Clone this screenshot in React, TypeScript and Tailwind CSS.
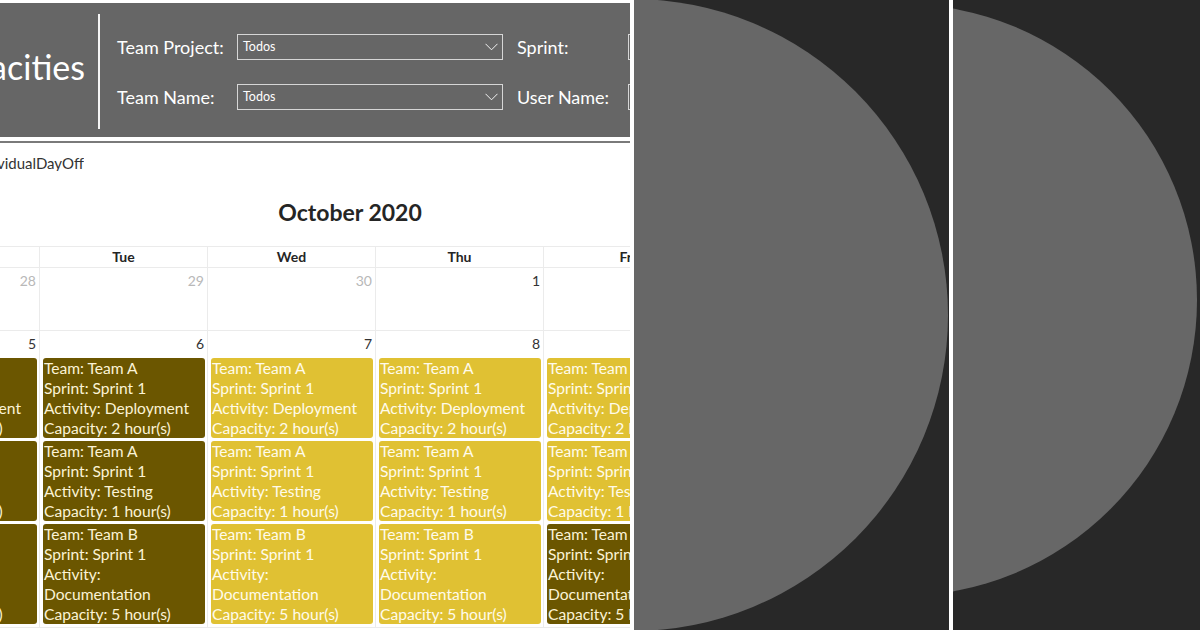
import React from 'react';

type Tone = 'dark' | 'light';

interface CalEvent {
  tone: Tone;
  lines: string[];
}

const deploy = ['Team: Team A', 'Sprint: Sprint 1', 'Activity: Deployment', 'Capacity: 2 hour(s)'];
const testing = ['Team: Team A', 'Sprint: Sprint 1', 'Activity: Testing', 'Capacity: 1 hour(s)'];
const docs = ['Team: Team B', 'Sprint: Sprint 1', 'Activity:', 'Documentation', 'Capacity: 5 hour(s)'];

const days = ['Mon', 'Tue', 'Wed', 'Thu', 'Fri', 'Sat', 'Sun'];

const firstWeek = [
  { n: 28, muted: true },
  { n: 29, muted: true },
  { n: 30, muted: true },
  { n: 1, muted: false },
  { n: 2, muted: false },
  { n: 3, muted: false },
  { n: 4, muted: false },
];

const secondWeek: { n: number; events: CalEvent[] }[] = [
  { n: 5, events: [{ tone: 'dark', lines: deploy }, { tone: 'dark', lines: testing }, { tone: 'dark', lines: docs }] },
  { n: 6, events: [{ tone: 'dark', lines: deploy }, { tone: 'dark', lines: testing }, { tone: 'dark', lines: docs }] },
  { n: 7, events: [{ tone: 'light', lines: deploy }, { tone: 'light', lines: testing }, { tone: 'light', lines: docs }] },
  { n: 8, events: [{ tone: 'light', lines: deploy }, { tone: 'light', lines: testing }, { tone: 'light', lines: docs }] },
  { n: 9, events: [{ tone: 'light', lines: deploy }, { tone: 'light', lines: testing }, { tone: 'dark', lines: docs }] },
  { n: 10, events: [] },
  { n: 11, events: [] },
];

const Chevron = () => (
  <svg width="13" height="8" viewBox="0 0 13 8" fill="none" stroke="#f2f2f2" strokeWidth="1">
    <polyline points="0.5,0.8 6.5,6.8 12.5,0.8" />
  </svg>
);

const Dropdown: React.FC<{ width: string }> = ({ width }) => (
  <div className={`${width} h-[26px] shrink-0 border border-[#d6d6d6] flex items-center justify-between pl-[5px] pr-[4px]`}>
    <span className="text-[12.5px] text-white leading-none">Todos</span>
    <Chevron />
  </div>
);

const FilterRow: React.FC<{ label: string; side: string }> = ({ label, side }) => (
  <div className="flex items-center h-[26px]">
    <span className="w-[120px] shrink-0 text-[18px] text-white whitespace-nowrap">{label}</span>
    <Dropdown width="w-[266px]" />
    <span className="w-[125px] shrink-0 pl-[14px] text-[18px] text-white whitespace-nowrap">{side}</span>
    <div className="w-[200px] h-[26px] shrink-0 border border-[#d6d6d6]" />
  </div>
);

const EventCard: React.FC<{ ev: CalEvent }> = ({ ev }) => (
  <div
    className={
      ev.tone === 'dark'
        ? 'rounded-[3px] bg-[#6b5600] text-[#fbf3d6] pl-[1px] text-[15.6px] leading-[20px] whitespace-nowrap overflow-hidden'
        : 'rounded-[3px] bg-[#e0c133] text-[#fffbea] pl-[1px] text-[15.6px] leading-[20px] whitespace-nowrap overflow-hidden'
    }
  >
    {ev.lines.map((l, i) => (
      <div key={i}>{l}</div>
    ))}
  </div>
);

const Calendar = () => (
  <div className="w-[630px] overflow-hidden">
    <div className="ml-[-128px] w-[1176px]">
      <div className="grid grid-cols-[repeat(7,168px)] h-[22px] border-t border-b border-[#ebebeb]">
        {days.map((d) => (
          <div key={d} className="border-r border-[#ebebeb] text-center text-[14px] font-bold text-[#252525] leading-[20px]">
            {d}
          </div>
        ))}
      </div>
      <div className="grid grid-cols-[repeat(7,168px)] h-[63px] border-b border-[#ebebeb]">
        {firstWeek.map((d) => (
          <div
            key={d.n}
            className={
              d.muted
                ? 'border-r border-[#ebebeb] pt-[5px] pr-[3px] text-right text-[14px] leading-[16px] text-[#b8b8b8]'
                : 'border-r border-[#ebebeb] pt-[5px] pr-[3px] text-right text-[14px] leading-[16px] text-[#333]'
            }
          >
            {d.n}
          </div>
        ))}
      </div>
      <div className="grid grid-cols-[repeat(7,168px)] border-b border-[#ebebeb]">
        {secondWeek.map((d) => (
          <div key={d.n} className="border-r border-[#ebebeb] pt-[5px] pb-[3px] pl-[3px] pr-[2px]">
            <div className="text-right text-[14px] leading-[16px] text-[#333] pr-[1px]">{d.n}</div>
            <div className="mt-[6px] flex flex-col gap-[3px]">
              {d.events.map((ev, i) => (
                <EventCard key={i} ev={ev} />
              ))}
            </div>
          </div>
        ))}
      </div>
    </div>
  </div>
);

const ReportPane = () => (
  <div className="w-[630px] h-[630px] shrink-0 overflow-hidden bg-white pt-[3px]">
    <div className="h-[134px] bg-[#666666] flex overflow-hidden">
      <div className="w-[85px] h-[128px] shrink-0 overflow-hidden flex justify-end items-center">
        <span className="text-[34px] text-white whitespace-nowrap leading-none">Capacities</span>
      </div>
      <div className="ml-[13px] mt-[11px] w-[2px] h-[115px] shrink-0 bg-[#f4f4f4]" />
      <div className="ml-[17px] pt-[31px] flex flex-col gap-[24px]">
        <FilterRow label="Team Project:" side="Sprint:" />
        <FilterRow label="Team Name:" side="User Name:" />
      </div>
    </div>
    <div className="mt-[4px] h-[2px] bg-[#7a7a7a]" />
    <div className="mt-[12px] w-[84px] overflow-hidden flex justify-end">
      <span className="text-[15px] leading-[16px] text-[#333] whitespace-nowrap">IndividualDayOff</span>
    </div>
    <div className="mt-[27px] w-[700px] text-center text-[23px] font-bold leading-[28px] text-[#252525]">October 2020</div>
    <div className="mt-[20px]">
      <Calendar />
    </div>
  </div>
);

export default function App() {
  return (
    <div className="w-[1200px] h-[630px] overflow-hidden bg-white flex gap-[4px]" style={{ fontFamily: 'Lato, "Noto Sans", sans-serif' }}>
      <ReportPane />
      <div className="relative w-[315px] h-[630px] shrink-0 overflow-hidden bg-[#282828]">
        <div className="absolute left-[-318px] top-[-1px] w-[632px] h-[632px] rounded-full bg-[#676767]" />
      </div>
      <div className="relative w-[247px] h-[630px] shrink-0 overflow-hidden bg-[#282828]">
        <div className="absolute left-[-348px] top-[4px] w-[592px] h-[592px] rounded-full bg-[#676767]" />
      </div>
    </div>
  );
}
